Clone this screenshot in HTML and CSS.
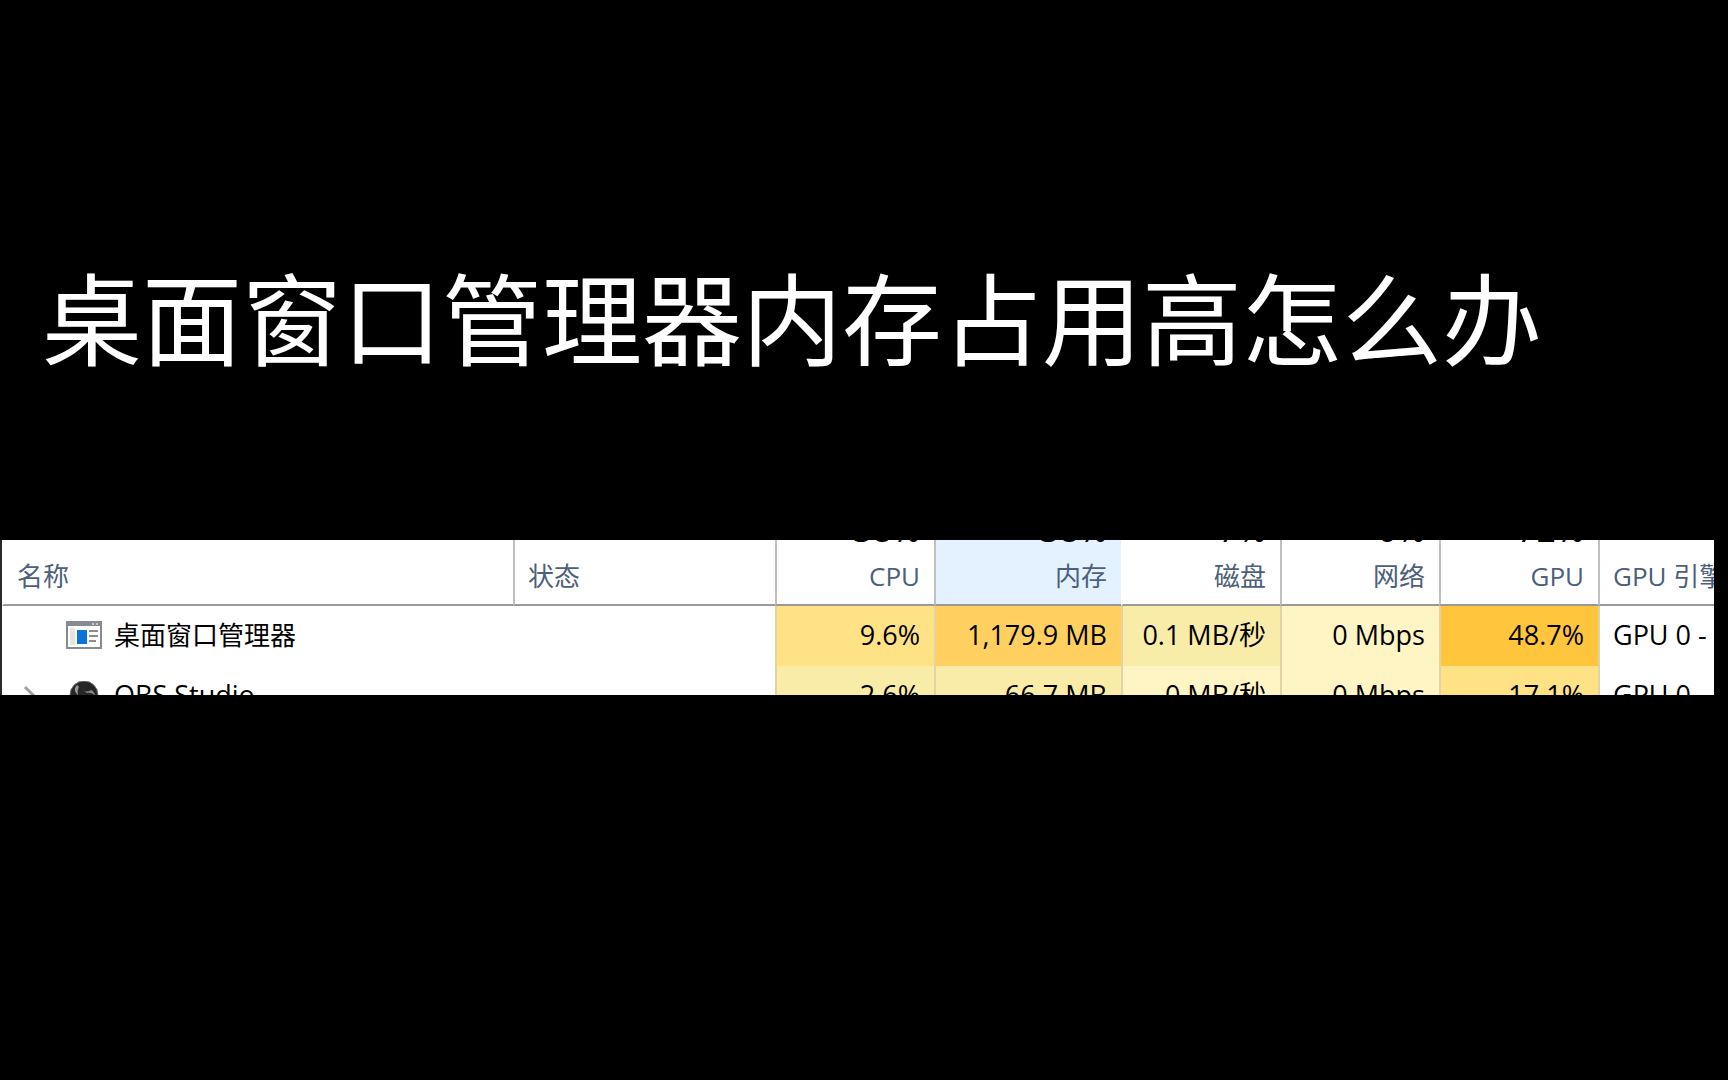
FILE: index.html
```html
<!DOCTYPE html>
<html lang="zh-CN">
<head>
    <meta charset="UTF-8">
    <meta name="viewport" content="width=device-width, initial-scale=1.0">
    <title>桌面窗口管理器内存占用高怎么办</title>
    <link rel="stylesheet" href="styles.css">
</head>
<body>
    <h1>桌面窗口管理器内存占用高怎么办</h1>

    <div class="panel">
        <table>
            <colgroup>
                <col class="col-name">
                <col class="col-status">
                <col class="col-usage">
                <col class="col-memory">
                <col class="col-usage">
                <col class="col-usage">
                <col class="col-usage">
                <col>
            </colgroup>
            <thead>
                <tr>
                    <th class="text">名称</th>
                    <th class="text">状态</th>
                    <th><span class="total">38%</span>CPU</th>
                    <th class="sorted"><span class="total">38%</span>内存</th>
                    <th class="no-line"><span class="total">7%</span>磁盘</th>
                    <th><span class="total">0%</span>网络</th>
                    <th><span class="total">72%</span>GPU</th>
                    <th class="text">GPU 引擎</th>
                </tr>
            </thead>
            <tbody>
                <tr>
                    <td class="name">
                        <div class="process">
                            <span class="arrow"></span>
                            <svg class="icon" viewBox="0 0 36 28">
                                <rect x="1" y="1" width="34" height="26" fill="#fff" stroke="#858b90" stroke-width="2"/>
                                <rect x="1" y="1" width="34" height="4" fill="#858b90"/>
                                <path d="M26 3h2M30 3h2" stroke="#fff" stroke-width="1"/>
                                <rect x="4" y="7" width="5" height="17" fill="#e4e4e4"/>
                                <rect x="11" y="9" width="10" height="14" fill="#0a74da"/>
                                <path d="M23 10h9M23 15h9M23 20h7" stroke="#8c8c8c" stroke-width="2"/>
                            </svg>
                            <span>桌面窗口管理器</span>
                        </div>
                    </td>
                    <td class="status"></td>
                    <td class="heat-3">9.6%</td>
                    <td class="heat-4">1,179.9 MB</td>
                    <td class="heat-2">0.1 MB/秒</td>
                    <td class="heat-1">0 Mbps</td>
                    <td class="heat-5">48.7%</td>
                    <td class="text">GPU 0 -</td>
                </tr>
                <tr>
                    <td class="name">
                        <div class="process">
                            <svg class="arrow" viewBox="0 0 14 20">
                                <path d="M3 2l8 8-8 8" fill="none" stroke="#a0a0a0" stroke-width="3"/>
                            </svg>
                            <svg class="icon" viewBox="0 0 36 28">
                                <circle cx="18" cy="14" r="14" fill="#262628" stroke="#777" stroke-width="1"/>
                                <path d="M11 4c-3 3-3 7 1 10-1-4 0-6 1-8z" fill="#9a9a9a"/>
                                <path d="M17 9c2 2 5 2 8 0 2 1 4 3 4 6-2-3-5-4-8-3-2-1-3-2-4-3z" fill="#8a8a8a"/>
                                <path d="M18 15c-4 1-6 5-4 9 1-3 4-5 8-4-3-1-4-3-4-5z" fill="#b8b8b8"/>
                            </svg>
                            <span class="latin">OBS Studio</span>
                        </div>
                    </td>
                    <td class="status"></td>
                    <td class="heat-2">2.6%</td>
                    <td class="heat-2">66.7 MB</td>
                    <td class="heat-1">0 MB/秒</td>
                    <td class="heat-1">0 Mbps</td>
                    <td class="heat-3">17.1%</td>
                    <td class="text">GPU 0</td>
                </tr>
            </tbody>
        </table>
    </div>
</body>
</html>
```
FILE: styles.css
```css
body {
    margin: 0;
    background-color: #000;
    font-family: "Open Sans", "Noto Sans CJK SC", sans-serif;
}
h1 {
    margin: 0;
    padding: 245px 42px 155px;
    color: #fff;
    font-size: 100px;
    font-weight: normal;
    line-height: 140px;
    font-family: "Noto Sans CJK SC", sans-serif;
    white-space: nowrap;
}
.panel {
    height: 155px;
    margin-right: 14px;
    border-left: 2px solid #2a2a2a;
    background-color: #fff;
    overflow: hidden;
}
/* the totals row is scrolled almost out of view */
table {
    width: 100%;
    margin-top: -40px;
    border-collapse: separate;
    border-spacing: 0;
    table-layout: fixed;
}
.col-name {
    width: 511px;
}
.col-status {
    width: 262px;
}
.col-usage {
    width: 159px;
}
.col-memory {
    width: 187px;
}
th, td {
    box-sizing: border-box;
    padding: 0 14px 0 0;
    text-align: right;
    line-height: 36px;
    white-space: nowrap;
    overflow: hidden;
}
th {
    height: 106px;
    padding-bottom: 10px;
    border-left: 2px solid #c0c0c0;
    border-bottom: 2px solid #999;
    color: #4c607a;
    font-size: 26px;
    font-weight: normal;
    vertical-align: bottom;
}
th:first-child {
    border-left-color: #fff;
}
th.sorted {
    background-color: #e4f2ff;
}
th.no-line {
    border-left-color: #fff;
}
.total {
    display: block;
    margin-bottom: 9px;
    color: #000;
    font-size: 34px;
    line-height: 40px;
}
td {
    height: 60px;
    padding-bottom: 2px;
    border-left: 2px solid #e2d3a0;
    color: #000;
    font-size: 27px;
}
td.name, td.status {
    border-left-color: #fff;
}
td.name {
    font-size: 26px;
}
.text {
    padding-left: 13px;
    padding-right: 0;
    text-align: left;
}
.process {
    display: flex;
    align-items: center;
    padding-left: 18px;
}
.arrow {
    width: 14px;
    height: 20px;
    margin-right: 30px;
}
.icon {
    width: 36px;
    height: 28px;
    margin-right: 12px;
}
.latin {
    font-size: 27px;
}
.heat-1 {
    background-color: #fff4c4;
}
.heat-2 {
    background-color: #f9eca8;
}
.heat-3 {
    background-color: #ffe285;
}
.heat-4 {
    background-color: #ffd060;
}
.heat-5 {
    background-color: #ffc53c;
}
```
